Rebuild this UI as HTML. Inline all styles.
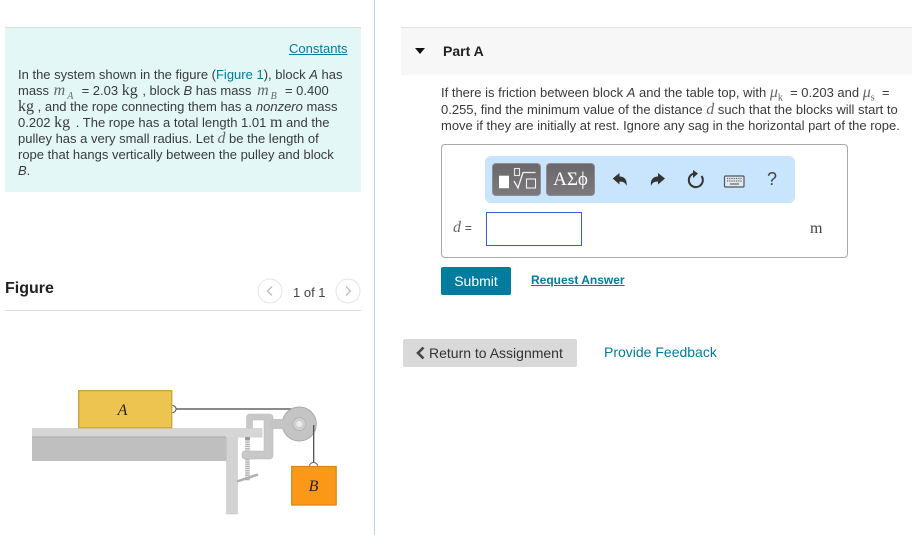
<!DOCTYPE html>
<html><head><meta charset="utf-8">
<style>
html,body{margin:0;padding:0;background:#fff;width:921px;height:535px;overflow:hidden}
body{position:relative;font-family:"Liberation Sans",sans-serif;font-size:13px;color:#333}
.a{position:absolute;white-space:nowrap}
.l{position:absolute;left:18px;white-space:nowrap;line-height:16px;font-size:13px;color:#3a3a3a}
.r{position:absolute;left:441px;white-space:nowrap;line-height:16px;font-size:13px;color:#3a3a3a}
.m{font-family:"Liberation Serif",serif;font-size:16px}
.mi{font-family:"Liberation Serif",serif;font-style:italic;font-size:16px;color:#666}
sub{font-size:10px;line-height:0;font-family:"Liberation Serif",serif;color:#666}
.link{color:#007c9e}
</style></head><body>
<div class="a" style="left:374px;top:0;width:1px;height:535px;background:#b9d2e2"></div>
<div class="a" style="left:5px;top:27px;width:356px;height:165px;background:#e3f7f7;border-top:1px solid #d9dfe3;box-sizing:border-box"></div>
<div class="a link" style="left:289px;top:41px;line-height:16px;text-decoration:underline">Constants</div>
<div class="l" style="top:67px">In the system shown in the figure (<span class="link">Figure 1</span>), block <i>A</i> has</div>
<div class="l" style="top:83px">mass <span class="mi" style="margin-left:1px">m</span><sub style="margin-left:2px"><i>A</i></sub><span style="margin-left:1px">&nbsp;&nbsp;= 2.03</span> <span class="m">kg</span> <span style="margin-left:1px">, block <i>B</i> has mass</span> <span class="mi" style="margin-left:2px">m</span><sub style="margin-left:2px"><i>B</i></sub><span style="margin-left:1px">&nbsp;&nbsp;= 0.400</span></div>
<div class="l" style="top:99px"><span class="m">kg</span> , and the rope connecting them has a <i>nonzero</i> mass</div>
<div class="l" style="top:115px">0.202 <span class="m">kg</span> <span style="margin-left:2px">. The rope has a total length 1.01</span> <span class="m">m</span> and the</div>
<div class="l" style="top:131px">pulley has a very small radius. Let <span class="mi">d</span> be the length of</div>
<div class="l" style="top:147px">rope that hangs vertically between the pulley and block</div>
<div class="l" style="top:163px"><i>B</i>.</div>

<div class="a" style="left:5px;top:279px;font-size:16px;line-height:19px;font-weight:bold;color:#222">Figure</div>
<div class="a" style="left:293px;top:285px;line-height:16px;color:#444">1 of 1</div>
<svg class="a" style="left:255px;top:277px" width="110" height="28" viewBox="0 0 110 28">
<circle cx="15" cy="14" r="12" fill="#fff" stroke="#e6e6e6"/><path d="M17 9.500L12.500 14L17 18.500" fill="none" stroke="#bbb" stroke-width="1.300"/>
<circle cx="93" cy="14" r="12" fill="#fff" stroke="#e6e6e6"/><path d="M91 9.500L95.500 14L91 18.500" fill="none" stroke="#bbb" stroke-width="1.300"/>
</svg>
<div class="a" style="left:5px;top:310px;width:356px;height:1px;background:#d9dfe3"></div>

<svg class="a" style="left:0;top:380px" width="375" height="140" viewBox="0 380 375 140">
<rect x="226.500" y="437" width="11" height="77" fill="#d3d3d3" stroke="#c4c4c4" stroke-width=".5"/>
<rect x="32" y="437" width="194.500" height="24" fill="#bfbfbf"/>
<rect x="32" y="428" width="230.500" height="9.500" fill="#d6d6d6"/>
<rect x="32" y="436.500" width="194" height="1" fill="#aaa"/>
<rect x="78.700" y="390.700" width="93" height="37" fill="#ecc44f" stroke="#c9a83c" stroke-width="1.400"/>
<text x="122.500" y="415" font-family="Liberation Serif,serif" font-style="italic" font-size="16" fill="#222" text-anchor="middle">A</text>
<path d="M172.500 405.500a3.500 3.500 0 0 1 0 7" fill="#fff" stroke="#555" stroke-width="1"/>
<line x1="176" y1="409" x2="300" y2="409" stroke="#444" stroke-width="1.200"/>
<line x1="247.500" y1="437" x2="247.500" y2="481" stroke="#b4b4b4" stroke-width="4.500" stroke-dasharray="1.500 .7"/>
<rect x="245" y="437" width="5" height="3" rx="1" fill="#999"/>
<line x1="237" y1="481.500" x2="258" y2="474.500" stroke="#b0b0b0" stroke-width="2.500"/>
<path d="M246.500 428V417a3 3 0 0 1 3-3H270a3 3 0 0 1 3 3V456a3 3 0 0 1-3 3H244.500a2.500 2.500 0 0 1-2.500-2.500V453.500a2.500 2.500 0 0 1 2.500-2.500H264V420H252.500V428Z" fill="#c8c8c8" stroke="#b8b8b8" stroke-width=".5"/>
<circle cx="299.300" cy="424" r="17" fill="#c4c4c4" stroke="#a9a9a9" stroke-width="1"/>
<path d="M268 423.500L273 419H299V429H273Z" fill="#c4c4c4"/>
<circle cx="299.300" cy="424" r="6.500" fill="#cfcfcf" stroke="#b0b0b0" stroke-width=".8"/>
<circle cx="299.300" cy="424" r="3" fill="#ececec"/>
<line x1="313.700" y1="425" x2="313.700" y2="463" stroke="#444" stroke-width="1.200"/>
<path d="M309.500 466a4 3.500 0 0 1 8 0" fill="#fff" stroke="#666" stroke-width="1"/>
<rect x="291.700" y="466.500" width="44.500" height="38.500" fill="#fb9817" stroke="#d8821a" stroke-width="1.200"/>
<text x="313.500" y="491" font-family="Liberation Serif,serif" font-style="italic" font-size="16" fill="#222" text-anchor="middle">B</text>
</svg>

<div class="a" style="left:401px;top:27px;width:511px;height:48px;background:#f7f7f7;border-top:1px solid #e2e2e2;box-sizing:border-box"></div>
<div class="a" style="left:415px;top:48px;width:0;height:0;border-left:5.500px solid transparent;border-right:5.500px solid transparent;border-top:6px solid #111"></div>
<div class="a" style="left:443px;top:43px;line-height:16px;font-size:14px;font-weight:bold;color:#222">Part A</div>

<div class="r" style="top:85px">If there is friction between block <i>A</i> and the table top, with <span class="mi">μ</span><sub>k</sub> &nbsp;= 0.203 and <span class="mi">μ</span><sub>s</sub> &nbsp;=</div>
<div class="r" style="top:102px">0.255, find the minimum value of the distance <span class="mi">d</span> such that the blocks will start to</div>
<div class="r" style="top:118px">move if they are initially at rest. Ignore any sag in the horizontal part of the rope.</div>

<div class="a" style="left:441px;top:144px;width:407px;height:114px;box-sizing:border-box;border:1px solid #aaa;border-radius:4px"></div>
<div class="a" style="left:485px;top:156px;width:310px;height:47px;background:#c9e4fd;border-radius:6px"></div>
<div class="a" style="left:492px;top:163px;width:49px;height:33px;border-radius:4px;background:linear-gradient(#6a686a,#7b797c);box-sizing:border-box;border:1px solid #8e8e90"></div>
<svg class="a" style="left:492px;top:163px" width="49" height="33" viewBox="0 0 49 33">
<rect x="7" y="12.700" width="10" height="12.500" fill="#fff"/>
<rect x="22.500" y="5.500" width="5" height="7" fill="none" stroke="#e8e8e8" stroke-width="1.100"/>
<path d="M22 18L26 25L31 9.500H43.500" fill="none" stroke="#f2f2f2" stroke-width="1.300"/>
<rect x="34.500" y="16" width="9" height="9" fill="none" stroke="#f2f2f2" stroke-width="1.100"/>
</svg>
<div class="a" style="left:546px;top:163px;width:49px;height:33px;border-radius:4px;background:linear-gradient(#6a686a,#7b797c);box-sizing:border-box;border:1px solid #8e8e90;color:#fff;text-align:center;font-family:'Liberation Serif',serif;font-size:19px;line-height:31px">ΑΣϕ</div>
<svg class="a" style="left:605px;top:165px" width="180" height="30" viewBox="0 0 180 30">
<path d="M7.700 13.500L14.500 8V11.500C19.500 11.500 22.500 15 21.500 21C20.500 18 18.500 16.500 14.500 16.500V19.500Z" fill="#333"/>
<path d="M60 13.500L53 8V11.500C48 11.500 45 15 46 21C47 18 49 16.500 53 16.500V19.500Z" fill="#333"/>
<path d="M88 8.700A7 7 0 1 0 96.500 11" fill="none" stroke="#333" stroke-width="2"/>
<path d="M93 8.500L88 5V13Z" fill="#333"/>
<rect x="119.500" y="11" width="19.500" height="11" rx="1" fill="#dfe9f2" stroke="#555" stroke-width="1.200"/>
<path d="M122 13.500h15M122 16h15" stroke="#666" stroke-width="1.200" stroke-dasharray="1 .8"/>
<path d="M125 19h9" stroke="#666" stroke-width="1.200"/>
</svg>
<div class="a" style="left:767px;top:169px;font-size:18px;line-height:20px;color:#444">?</div>

<div class="a" style="left:453px;top:219px;line-height:16px;font-size:14px;color:#444"><span class="mi">d</span> <span style="font-size:12px">=</span></div>
<div class="a" style="left:486px;top:212px;width:96px;height:34px;box-sizing:border-box;border:1px solid #3a5ed0;background:#fff"></div>
<div class="a" style="left:810px;top:221px;font-family:'Liberation Serif',serif;font-size:16px;line-height:16px;color:#444">m</div>

<div class="a" style="left:441px;top:267px;width:70px;height:28px;background:#007c9e;border-radius:2px;color:#fff;text-align:center;line-height:28px;font-size:14px">Submit</div>
<div class="a link" style="left:531px;top:273px;font-size:12px;line-height:15px;font-weight:bold;text-decoration:underline">Request Answer</div>

<div class="a" style="left:403px;top:339px;width:174px;height:28px;background:#d9d9d9;border-radius:2px;line-height:28px;font-size:14px;color:#333"><svg style="position:absolute;left:12px;top:7px" width="11" height="14" viewBox="0 0 11 14"><path d="M8.500 1.500L3 7L8.500 12.500" fill="none" stroke="#444" stroke-width="2.600"/></svg><span style="position:absolute;left:26px;top:0">Return to Assignment</span></div>
<div class="a link" style="left:604px;top:344px;line-height:16px;font-size:14px">Provide Feedback</div>
</body></html>
